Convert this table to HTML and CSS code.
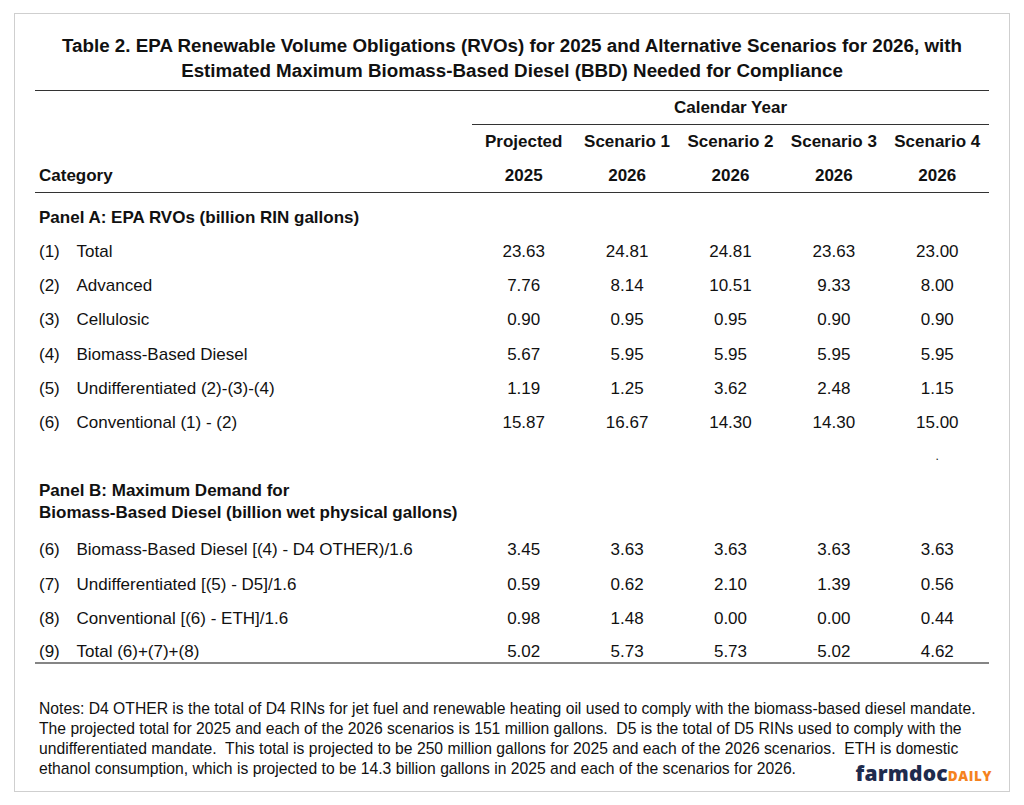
FILE: index.html
```html
<!DOCTYPE html>
<html lang="en">
<head>
<meta charset="utf-8">
<title>Table 2. EPA Renewable Volume Obligations</title>
<link rel="stylesheet" href="styles.css">
</head>
<body>
<div class="frame">
  <h1 class="title">Table 2. EPA Renewable Volume Obligations (RVOs) for 2025 and Alternative Scenarios for 2026, with<br>Estimated Maximum Biomass-Based Diesel (BBD) Needed for Compliance</h1>
  <table class="rvo">
    <colgroup>
      <col class="c-cat">
      <col class="c-num"><col class="c-num"><col class="c-num"><col class="c-num"><col class="c-num">
    </colgroup>
    <thead>
      <tr class="h-top">
        <th></th>
        <th colspan="5" class="cal">Calendar Year</th>
      </tr>
      <tr class="h-mid">
        <th></th>
        <th>Projected</th><th>Scenario 1</th><th>Scenario 2</th><th>Scenario 3</th><th>Scenario 4</th>
      </tr>
      <tr class="h-bot">
        <th class="cat">Category</th>
        <th>2025</th><th>2026</th><th>2026</th><th>2026</th><th>2026</th>
      </tr>
    </thead>
    <tbody>
      <tr class="panel-a"><td class="panel" colspan="6">Panel A: EPA RVOs (billion RIN gallons)</td></tr>
      <tr class="row"><td class="lbl"><span class="no">(1)</span>Total</td><td>23.63</td><td>24.81</td><td>24.81</td><td>23.63</td><td>23.00</td></tr>
      <tr class="row"><td class="lbl"><span class="no">(2)</span>Advanced</td><td>7.76</td><td>8.14</td><td>10.51</td><td>9.33</td><td>8.00</td></tr>
      <tr class="row"><td class="lbl"><span class="no">(3)</span>Cellulosic</td><td>0.90</td><td>0.95</td><td>0.95</td><td>0.90</td><td>0.90</td></tr>
      <tr class="row"><td class="lbl"><span class="no">(4)</span>Biomass-Based Diesel</td><td>5.67</td><td>5.95</td><td>5.95</td><td>5.95</td><td>5.95</td></tr>
      <tr class="row"><td class="lbl"><span class="no">(5)</span>Undifferentiated (2)-(3)-(4)</td><td>1.19</td><td>1.25</td><td>3.62</td><td>2.48</td><td>1.15</td></tr>
      <tr class="row"><td class="lbl"><span class="no">(6)</span>Conventional (1) - (2)</td><td>15.87</td><td>16.67</td><td>14.30</td><td>14.30</td><td>15.00</td></tr>
      <tr class="blank"><td></td><td></td><td></td><td></td><td></td><td class="dot">.</td></tr>
      <tr class="panel-b"><td class="panel" colspan="6">Panel B: Maximum Demand for<br>Biomass-Based Diesel (billion wet physical gallons)</td></tr>
      <tr class="row"><td class="lbl"><span class="no">(6)</span>Biomass-Based Diesel [(4) - D4 OTHER)/1.6</td><td>3.45</td><td>3.63</td><td>3.63</td><td>3.63</td><td>3.63</td></tr>
      <tr class="row"><td class="lbl"><span class="no">(7)</span>Undifferentiated [(5) - D5]/1.6</td><td>0.59</td><td>0.62</td><td>2.10</td><td>1.39</td><td>0.56</td></tr>
      <tr class="row"><td class="lbl"><span class="no">(8)</span>Conventional [(6) - ETH]/1.6</td><td>0.98</td><td>1.48</td><td>0.00</td><td>0.00</td><td>0.44</td></tr>
      <tr class="last"><td class="lbl"><span class="no">(9)</span>Total (6)+(7)+(8)</td><td>5.02</td><td>5.73</td><td>5.73</td><td>5.02</td><td>4.62</td></tr>
    </tbody>
  </table>
  <p class="notes">Notes: D4 OTHER is the total of D4 RINs for jet fuel and renewable heating oil used to comply with the biomass-based diesel mandate.<br>The projected total for 2025 and each of the 2026 scenarios is 151 million gallons.&nbsp; D5 is the total of D5 RINs used to comply with the<br>undifferentiated mandate.&nbsp; This total is projected to be 250 million gallons for 2025 and each of the 2026 scenarios.&nbsp; ETH is domestic<br>ethanol consumption, which is projected to be 14.3 billion gallons in 2025 and each of the scenarios for 2026.</p>
  <div class="logo"><span class="logo-farm">farmdoc</span><span class="logo-daily">DAILY</span></div>
</div>
</body>
</html>
```
FILE: styles.css
```css
html, body {
  margin: 0;
  padding: 0;
  background: #ffffff;
}

body {
  font-family: "Liberation Sans", Arial, sans-serif;
  color: #111111;
}

.frame {
  position: relative;
  box-sizing: border-box;
  width: 996px;
  height: 779px;
  margin: 13px 0 0 14px;
  border: 1px solid #cfcfcf;
  padding: 19px 20px 0 20px;
}

.title {
  margin: 0 0 7px 0;
  font-size: 18.8px;
  line-height: 25px;
  font-weight: bold;
  text-align: center;
  color: #111111;
  white-space: nowrap;
}

.rvo {
  width: 954px;
  border-collapse: collapse;
  table-layout: fixed;
  border-top: 1px solid #333333;
  border-bottom: 2px solid #858585;
  font-size: 17px;
}

.c-cat { width: 437px; }
.c-num { width: 103.4px; }

.rvo th, .rvo td {
  padding: 0;
  text-align: center;
  vertical-align: middle;
  line-height: 20px;
  white-space: nowrap;
}

.rvo th {
  font-weight: bold;
}

.h-top { height: 34px; }
.h-top .cal { border-bottom: 1px solid #333333; }
.h-mid { height: 35px; }
.h-bot { height: 33px; border-bottom: 1px solid #333333; }

.rvo th.cat, .rvo td.lbl, .rvo td.panel {
  text-align: left;
  padding-left: 4px;
}

.rvo td.panel {
  font-weight: bold;
}

.panel-a td { padding-top: 9px; }

.rvo tbody tr { height: 34.2px; }
.rvo tbody tr.row td { padding-top: 3px; }
.rvo tbody tr.panel-a { height: 41px; }
.rvo tbody tr.panel-b { height: 59px; }
.panel-b td { line-height: 22.3px; }
.rvo tbody tr.last { height: 29px; }
.last td { vertical-align: bottom; }

.no {
  display: inline-block;
  width: 37.5px;
}

.dot {
  font-size: 12px;
  vertical-align: middle;
}

.notes {
  margin: 35px 0 0 0;
  padding-left: 4px;
  font-size: 15.7px;
  line-height: 20px;
  color: #111111;
  white-space: nowrap;
}

.logo {
  position: absolute;
  right: 17px;
  bottom: 3px;
  font-family: "Open Sans", "DejaVu Sans", sans-serif;
  font-weight: 800;
  line-height: 24px;
  white-space: nowrap;
}

.logo-farm {
  font-size: 21px;
  color: #1f2b4d;
  letter-spacing: 0.2px;
}

.logo-daily {
  font-size: 13.5px;
  color: #f58220;
  letter-spacing: 0.6px;
}
```
